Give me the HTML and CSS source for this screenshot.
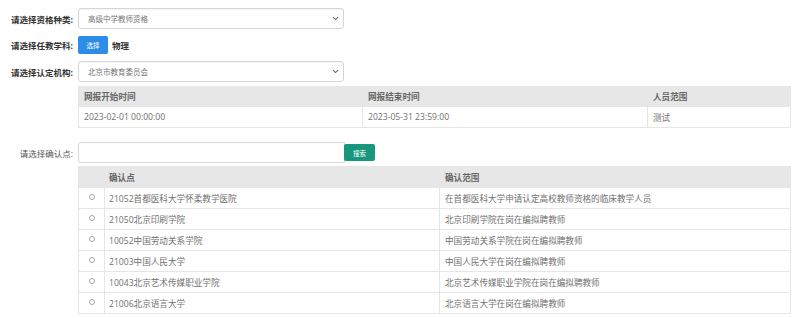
FILE: index.html
```html
<!DOCTYPE html>
<html lang="zh-CN">
<head>
<meta charset="utf-8">
<title>认定</title>
<link rel="stylesheet" href="styles.css">
</head>
<body>
<div class="page">
  <div class="row row-select">
    <label class="lbl lbl-bold">请选择资格种类:</label>
    <div class="select">
      <span class="select-text">高级中学教师资格</span>
      <svg class="chev" width="7" height="5" viewBox="0 0 7 5"><path d="M1 1.2 L3.5 3.6 L6 1.2" fill="none" stroke="#666" stroke-width="1.1"/></svg>
    </div>
  </div>
  <div class="row row-btn">
    <label class="lbl lbl-bold">请选择任教学科:</label>
    <button class="btn btn-blue">选择</button>
    <span class="subject">物理</span>
  </div>
  <div class="row row-select">
    <label class="lbl lbl-bold">请选择认定机构:</label>
    <div class="select">
      <span class="select-text">北京市教育委员会</span>
      <svg class="chev" width="7" height="5" viewBox="0 0 7 5"><path d="M1 1.2 L3.5 3.6 L6 1.2" fill="none" stroke="#666" stroke-width="1.1"/></svg>
    </div>
  </div>

  <table class="tbl tbl-time">
    <colgroup><col class="c1"><col class="c2"><col class="c3"></colgroup>
    <thead><tr><th>网报开始时间</th><th>网报结束时间</th><th>人员范围</th></tr></thead>
    <tbody><tr><td>2023-02-01 00:00:00</td><td>2023-05-31 23:59:00</td><td>测试</td></tr></tbody>
  </table>

  <div class="row row-search">
    <label class="lbl">请选择确认点:</label>
    <input class="search-input" type="text">
    <button class="btn btn-green">搜索</button>
  </div>

  <table class="tbl tbl-points">
    <colgroup><col class="p1"><col class="p2"><col class="p3"></colgroup>
    <thead><tr><th></th><th>确认点</th><th>确认范围</th></tr></thead>
    <tbody>
      <tr><td class="rc"><span class="radio"></span></td><td>21052首都医科大学怀柔教学医院</td><td>在首都医科大学申请认定高校教师资格的临床教学人员</td></tr>
      <tr><td class="rc"><span class="radio"></span></td><td>21050北京印刷学院</td><td>北京印刷学院在岗在编拟聘教师</td></tr>
      <tr><td class="rc"><span class="radio"></span></td><td>10052中国劳动关系学院</td><td>中国劳动关系学院在岗在编拟聘教师</td></tr>
      <tr><td class="rc"><span class="radio"></span></td><td>21003中国人民大学</td><td>中国人民大学在岗在编拟聘教师</td></tr>
      <tr><td class="rc"><span class="radio"></span></td><td>10043北京艺术传媒职业学院</td><td>北京艺术传媒职业学院在岗在编拟聘教师</td></tr>
      <tr><td class="rc"><span class="radio"></span></td><td>21006北京语言大学</td><td>北京语言大学在岗在编拟聘教师</td></tr>
    </tbody>
  </table>
</div>
</body>
</html>
```

FILE: styles.css
```css
* { box-sizing: border-box; }
html, body { margin: 0; padding: 0; background: #fff; }
body {
  font-family: "Open Sans", "Noto Sans CJK SC", sans-serif;
  color: #555;
  overflow: hidden;
}
.page {
  padding: 8px 0 0 0;
  width: 797px;
}
.row {
  display: flex;
  align-items: center;
}
.lbl {
  width: 73px;
  text-align: right;
  margin-right: 5px;
  font-size: 8.5px;
  color: #444;
  white-space: nowrap;
  flex: none;
}
.lbl-bold { font-weight: bold; color: #333; }
.row-select { height: 21px; }
.row-select + .row-btn { margin-top: 7px; }
.row-btn { height: 18px; }
.row-btn + .row-select { margin-top: 7px; }
.select {
  width: 266px;
  height: 21px;
  border: 1px solid #d6d6d6;
  border-radius: 3px;
  display: flex;
  align-items: center;
  justify-content: space-between;
  padding: 0 4px 0 9px;
  box-shadow: inset 0 1px 1px rgba(0,0,0,0.04);
}
.select-text { font-size: 7.5px; color: #777; }
.chev { display: block; }
.btn {
  border: none;
  color: #fff;
  font-family: inherit;
  font-size: 6.5px;
  border-radius: 2px;
  padding: 0;
  cursor: pointer;
}
.btn-blue {
  width: 30px;
  height: 18px;
  background: #2d8ce6;
}
.subject {
  margin-left: 4px;
  font-size: 8.5px;
  color: #333;
  font-weight: bold;
}
.tbl {
  margin-left: 78px;
  width: 712px;
  border-collapse: collapse;
  table-layout: fixed;
  font-size: 8.6px;
}
.tbl th, .tbl td {
  border: 1px solid #e6e6e6;
  text-align: left;
  padding: 0 0 0 5px;
  white-space: nowrap;
  overflow: hidden;
}
.tbl th {
  background: #e7e7e7;
  font-weight: bold;
  color: #666;
  height: 20px;
}
.tbl td {
  height: 21px;
  color: #707070;
}
.tbl-time { margin-top: 4px; }
.c1 { width: 284px; }
.c2 { width: 285px; }
.c3 { width: 143px; }
.row-search { margin-top: 14px; height: 21px; }
.row-search .lbl { color: #555; }
.search-input {
  width: 267px;
  height: 21px;
  border: 1px solid #d6d6d6;
  border-radius: 3px 0 0 3px;
  margin: 0;
  padding: 0 4px;
  outline: none;
}
.btn-green {
  width: 31px;
  height: 17px;
  background: #18977c;
  margin-left: -1px;
}
.tbl-points { margin-top: 3px; }
.tbl-points th { height: 21px; }
.p1 { width: 26px; }
.p2 { width: 335px; }
.p3 { width: 351px; }
.tbl-points th:nth-child(2), .tbl-points td:nth-child(2) { padding-left: 4px; }
.tbl-points td.rc { padding: 0; text-align: center; }
.radio {
  display: inline-block;
  width: 6px;
  height: 6px;
  border: 1px solid #a5a5a5;
  border-radius: 50%;
  vertical-align: middle;
  margin-top: -3px;
}
```
